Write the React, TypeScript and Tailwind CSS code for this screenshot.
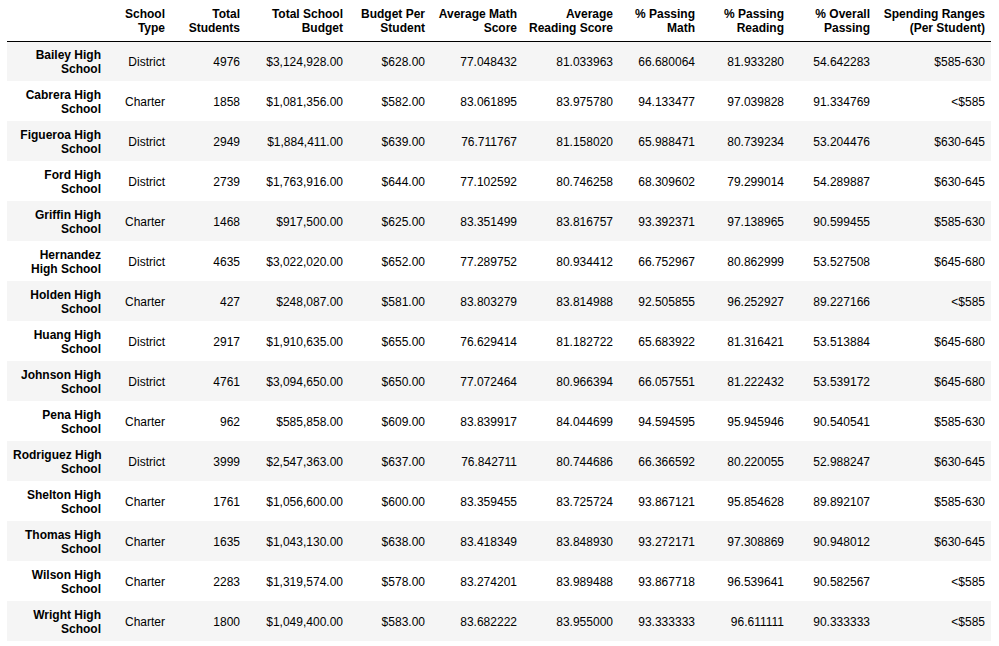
import React from "react";

type Row = [string, string, number, string, string, string, string, string, string, string, string];

const rows: Row[] = [
  ["Bailey High School", "District", 4976, "$3,124,928.00", "$628.00", "77.048432", "81.033963", "66.680064", "81.933280", "54.642283", "$585-630"],
  ["Cabrera High School", "Charter", 1858, "$1,081,356.00", "$582.00", "83.061895", "83.975780", "94.133477", "97.039828", "91.334769", "<$585"],
  ["Figueroa High School", "District", 2949, "$1,884,411.00", "$639.00", "76.711767", "81.158020", "65.988471", "80.739234", "53.204476", "$630-645"],
  ["Ford High School", "District", 2739, "$1,763,916.00", "$644.00", "77.102592", "80.746258", "68.309602", "79.299014", "54.289887", "$630-645"],
  ["Griffin High School", "Charter", 1468, "$917,500.00", "$625.00", "83.351499", "83.816757", "93.392371", "97.138965", "90.599455", "$585-630"],
  ["Hernandez High School", "District", 4635, "$3,022,020.00", "$652.00", "77.289752", "80.934412", "66.752967", "80.862999", "53.527508", "$645-680"],
  ["Holden High School", "Charter", 427, "$248,087.00", "$581.00", "83.803279", "83.814988", "92.505855", "96.252927", "89.227166", "<$585"],
  ["Huang High School", "District", 2917, "$1,910,635.00", "$655.00", "76.629414", "81.182722", "65.683922", "81.316421", "53.513884", "$645-680"],
  ["Johnson High School", "District", 4761, "$3,094,650.00", "$650.00", "77.072464", "80.966394", "66.057551", "81.222432", "53.539172", "$645-680"],
  ["Pena High School", "Charter", 962, "$585,858.00", "$609.00", "83.839917", "84.044699", "94.594595", "95.945946", "90.540541", "$585-630"],
  ["Rodriguez High School", "District", 3999, "$2,547,363.00", "$637.00", "76.842711", "80.744686", "66.366592", "80.220055", "52.988247", "$630-645"],
  ["Shelton High School", "Charter", 1761, "$1,056,600.00", "$600.00", "83.359455", "83.725724", "93.867121", "95.854628", "89.892107", "$585-630"],
  ["Thomas High School", "Charter", 1635, "$1,043,130.00", "$638.00", "83.418349", "83.848930", "93.272171", "97.308869", "90.948012", "$630-645"],
  ["Wilson High School", "Charter", 2283, "$1,319,574.00", "$578.00", "83.274201", "83.989488", "93.867718", "96.539641", "90.582567", "<$585"],
  ["Wright High School", "Charter", 1800, "$1,049,400.00", "$583.00", "83.682222", "83.955000", "93.333333", "96.611111", "90.333333", "<$585"],
];

const headers: [string, string][] = [
  ["School", "Type"],
  ["Total", "Students"],
  ["Total School", "Budget"],
  ["Budget Per", "Student"],
  ["Average Math", "Score"],
  ["Average", "Reading Score"],
  ["% Passing", "Math"],
  ["% Passing", "Reading"],
  ["% Overall", "Passing"],
  ["Spending Ranges", "(Per Student)"],
];

// column widths incl. 6px padding each side
const widths = ["w-[100px]", "w-[64px]", "w-[75px]", "w-[103px]", "w-[82px]", "w-[92px]", "w-[96px]", "w-[82px]", "w-[89px]", "w-[86px]", "w-[115px]"];

// pandas wraps the index labels onto two lines
function splitName(name: string): [string, string] {
  if (name === "Hernandez High School") return ["Hernandez", "High School"];
  const parts = name.split(" ");
  return [parts.slice(0, -1).join(" "), parts[parts.length - 1]];
}

export default function App() {
  return (
    <div className="w-[999px] h-[646px] bg-white overflow-hidden font-['Liberation_Sans',Arial,sans-serif] text-[12px] leading-[14px] text-black">
      <table className="ml-[7px] table-fixed border-collapse w-[984px]">
        <colgroup>
          {widths.map((w, i) => (
            <col key={i} className={w} />
          ))}
        </colgroup>
        <thead>
          <tr className="h-[41px] border-b border-black">
            <th className="px-[6px]"></th>
            {headers.map(([a, b], i) => (
              <th key={i} className="px-[6px] pt-[2px] text-right font-bold align-middle whitespace-nowrap">
                <div>{a}</div>
                <div>{b}</div>
              </th>
            ))}
          </tr>
        </thead>
        <tbody>
          {rows.map((r, i) => {
            const [first, second] = splitName(r[0]);
            return (
              <tr key={r[0]} className={`h-[40px] ${i % 2 === 0 ? "bg-[#f5f5f5]" : "bg-white"}`}>
                <th className="px-[6px] pt-[2px] text-right font-bold align-middle whitespace-nowrap">
                  <div>{first}</div>
                  <div>{second}</div>
                </th>
                {r.slice(1).map((v, j) => (
                  <td key={j} className="px-[6px] pt-[2px] text-right align-middle whitespace-nowrap">
                    {v}
                  </td>
                ))}
              </tr>
            );
          })}
        </tbody>
      </table>
    </div>
  );
}
